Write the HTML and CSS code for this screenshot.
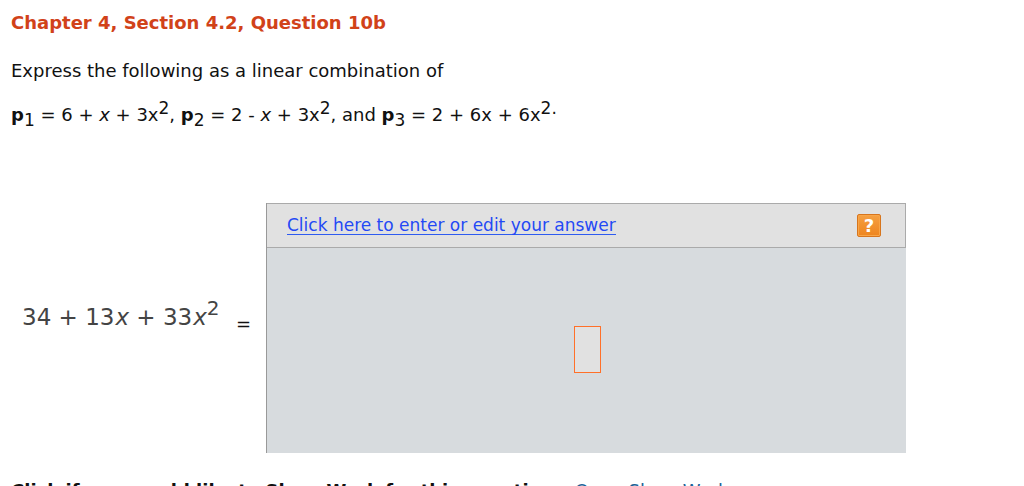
FILE: index.html
```
<!DOCTYPE html>
<html lang="en">
<head>
  <meta charset="utf-8">
  <title>Chapter 4, Section 4.2, Question 10b</title>
  <link rel="stylesheet" href="styles.css">
</head>
<body>
  <div class="question">
    <h1>Chapter 4, Section 4.2, Question 10b</h1>

    <p>Express the following as a linear combination of</p>
    <p class="vectors"><b>p</b><sub>1</sub> = 6 + <i>x</i> + 3x<sup>2</sup>, <b>p</b><sub>2</sub> = 2 - <i>x</i> + 3x<sup>2</sup>, and <b>p</b><sub>3</sub> = 2 + 6x + 6x<sup>2.</sup></p>

    <div class="answer">
      <div class="expression">34 + 13<i>x</i> + 33<i>x</i><sup>2</sup></div>
      <div class="equals">=</div>
      <div class="editor">
        <div class="toolbar">
          <a href="#">Click here to enter or edit your answer</a>
          <button type="button" class="help" aria-label="Help">?</button>
        </div>
        <div class="canvas">
          <input type="text" class="box" aria-label="Your answer">
        </div>
      </div>
    </div>

    <p class="show-work"><b>Click if you would like to Show Work for this question:</b> <a href="#">Open Show Work</a></p>
  </div>
</body>
</html>
```
FILE: styles.css
```
html {
  overflow: hidden;
}

body {
  margin: 0;
  padding: 12px 11px;
  background-color: #fff;
  color: #111;
  font-family: Verdana, "DejaVu Sans", sans-serif;
  font-size: 18px;
  line-height: 22px;
}

h1 {
  margin: 0 0 26px;
  color: #d14219;
  font-size: 18px;
  line-height: 22px;
}

p {
  margin: 0 0 22px;
}

sub,
sup {
  font-size: 17px;
  line-height: 0;
}

.vectors {
  margin-bottom: 77px;
}

/* Expression on the left, answer editor on the right */
.answer {
  display: flex;
  align-items: center;
  margin-right: 107px;
}

.expression {
  width: 225px;
  padding: 0 0 22px 11px;
  box-sizing: border-box;
  color: #444;
  font-size: 23px;
  line-height: 28px;
}

.expression i {
  margin-left: 1px;
}

.expression sup {
  font-size: 20px;
  vertical-align: 10px;
}

.equals {
  width: 30px;
  padding-bottom: 8px;
}

.editor {
  flex: 1;
  border-left: 1px solid #999;
  background-color: #d7dbde;
}

.toolbar {
  display: flex;
  align-items: center;
  justify-content: space-between;
  height: 45px;
  padding: 0 24px 0 20px;
  border: 1px solid #aaa;
  border-left: none;
  box-sizing: border-box;
  background-color: #e1e1e1;
}

.toolbar a {
  border-bottom: 1px solid #2e5bf0;
  color: #2449f5;
  font-size: 17px;
  line-height: 18px;
  text-decoration: none;
}

.help {
  width: 24px;
  height: 23px;
  padding: 0;
  border: 1px solid #d7751d;
  border-radius: 2px;
  background: linear-gradient(#f5a043, #ee851e);
  box-shadow: inset 0 0 0 1px #f8a547;
  color: #fff;
  font: bold 18px "DejaVu Sans", sans-serif;
}

.canvas {
  display: flex;
  align-items: center;
  justify-content: center;
  height: 205px;
  padding: 0 0 2px 2px;
  box-sizing: border-box;
}

.box {
  width: 27px;
  height: 47px;
  padding: 0;
  border: 1px solid #ff7029;
  border-radius: 0;
  box-sizing: border-box;
  background-color: #e1e1e1;
}

.show-work {
  margin: 27px 0 0;
  white-space: nowrap;
}

.show-work a {
  margin-left: 8px;
  color: #1d6398;
  text-decoration: none;
}
```
